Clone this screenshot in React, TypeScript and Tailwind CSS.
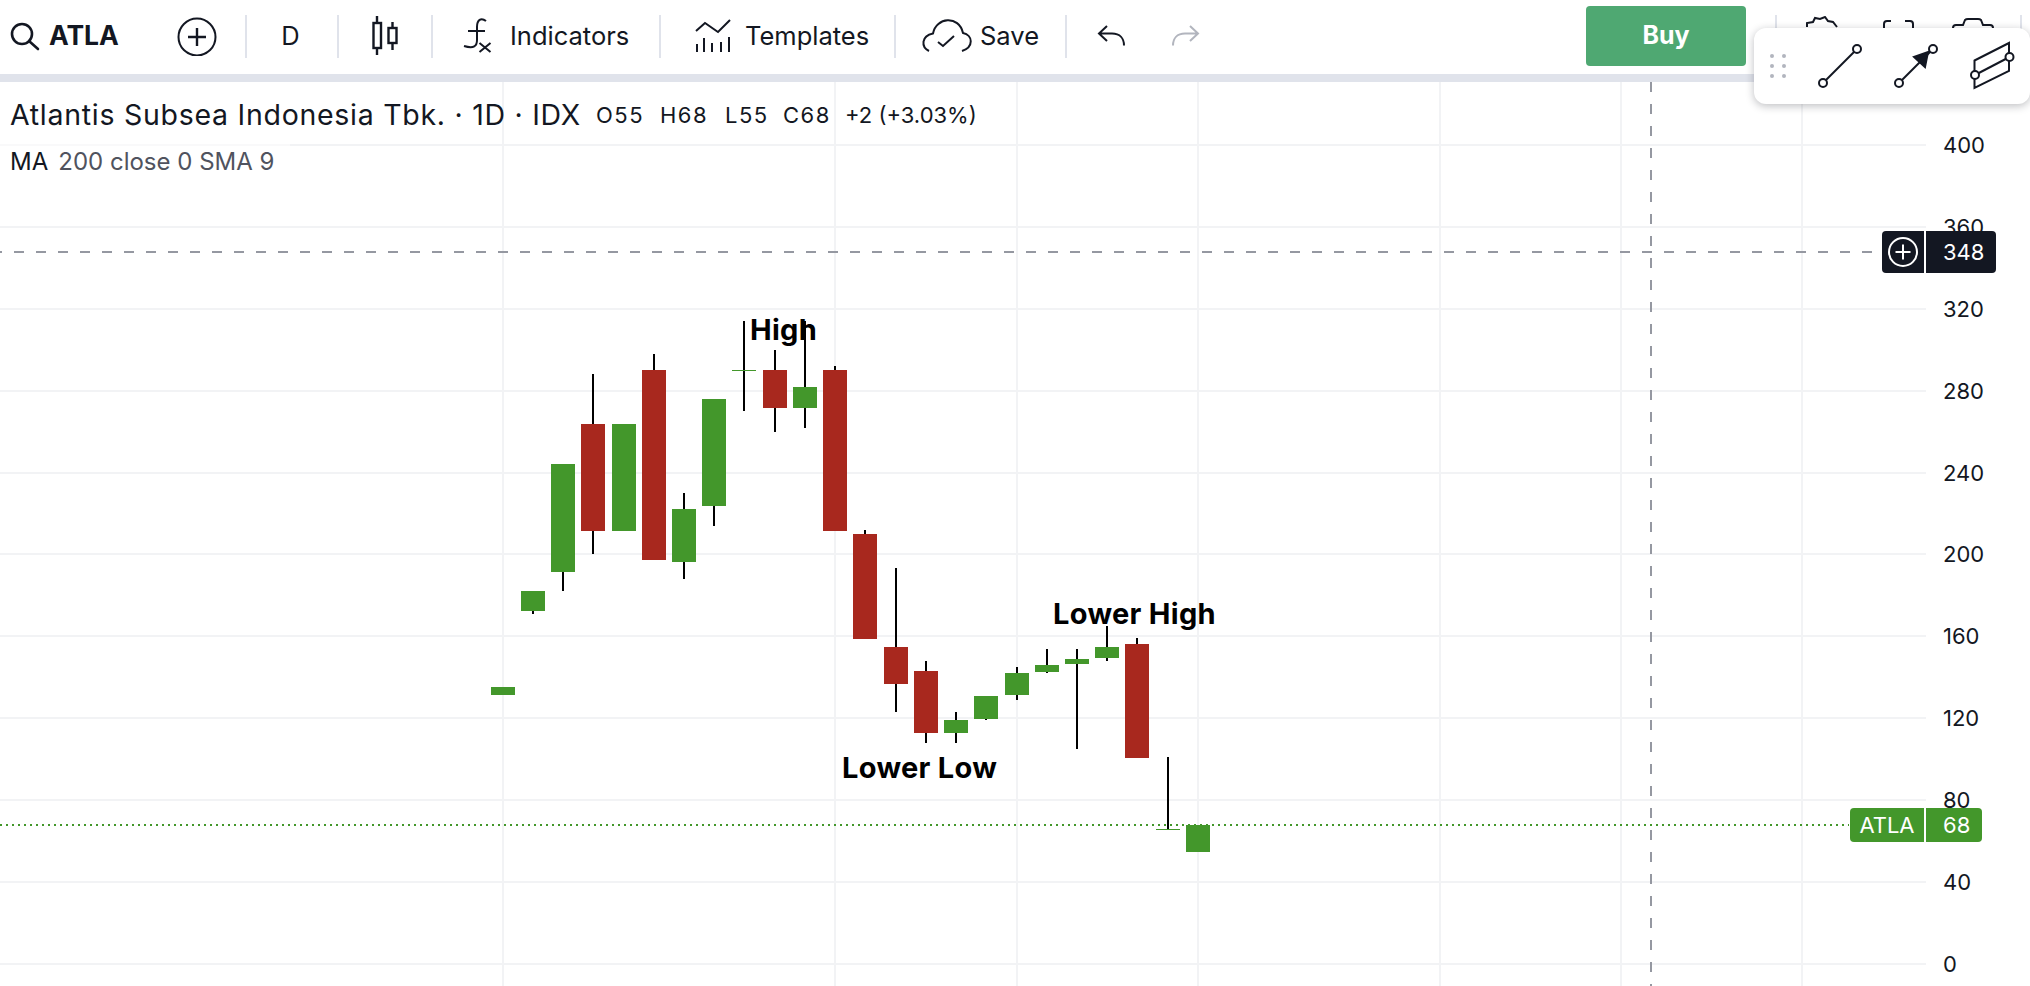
const FONT = "font-['Inter','Liberation_Sans',sans-serif]";

type Candle = { x: number; top: number; bottom: number; wickTop?: number; wickBottom?: number; up: boolean };

const candles: Candle[] = [
  { x: 503, top: 687, bottom: 695, up: true },
  { x: 533, top: 591, bottom: 611, wickBottom: 614, up: true },
  { x: 563, top: 464, bottom: 572, wickBottom: 591, up: true },
  { x: 593, top: 424, bottom: 531, wickTop: 374, wickBottom: 554, up: false },
  { x: 624, top: 424, bottom: 531, up: true },
  { x: 654, top: 370, bottom: 560, wickTop: 354, up: false },
  { x: 684, top: 509, bottom: 562, wickTop: 493, wickBottom: 579, up: true },
  { x: 714, top: 399, bottom: 506, wickBottom: 526, up: true },
  { x: 744, top: 370, bottom: 371, wickTop: 321, wickBottom: 411, up: true },
  { x: 775, top: 370, bottom: 408, wickTop: 350, wickBottom: 432, up: false },
  { x: 805, top: 387, bottom: 408, wickTop: 321, wickBottom: 428, up: true },
  { x: 835, top: 370, bottom: 531, wickTop: 366, up: false },
  { x: 865, top: 534, bottom: 639, wickTop: 530, up: false },
  { x: 896, top: 647, bottom: 684, wickTop: 568, wickBottom: 712, up: false },
  { x: 926, top: 671, bottom: 733, wickTop: 661, wickBottom: 743, up: false },
  { x: 956, top: 720, bottom: 733, wickTop: 712, wickBottom: 743, up: true },
  { x: 986, top: 696, bottom: 719, wickBottom: 720, up: true },
  { x: 1017, top: 673, bottom: 695, wickTop: 667, wickBottom: 700, up: true },
  { x: 1047, top: 665, bottom: 672, wickTop: 649, wickBottom: 673, up: true },
  { x: 1077, top: 659, bottom: 664, wickTop: 649, wickBottom: 749, up: true },
  { x: 1107, top: 647, bottom: 658, wickTop: 626, wickBottom: 661, up: true },
  { x: 1137, top: 644, bottom: 758, wickTop: 638, up: false },
  { x: 1168, top: 829, bottom: 830, wickTop: 757, up: true },
  { x: 1198, top: 825, bottom: 852, up: true },
];

const hGrid = [145, 227, 309, 391, 473, 554, 636, 718, 800, 882, 964];
const vGrid = [503, 835, 1017, 1198, 1440, 1621, 1802];
const ticks = ["400", "360", "320", "280", "240", "200", "160", "120", "80", "40", "0"];

function Divider() {
  return <div className="w-[2px] h-[43px] shrink-0 bg-[#e0e3eb]" />;
}

function Chart() {
  return (
    <svg className="block w-full h-full" viewBox="0 82 2030 904">
      {hGrid.map((y) => (
        <rect key={y} x={0} y={y - 1} width={1926} height={2} fill="#f2f3f5" />
      ))}
      {vGrid.map((x) => (
        <rect key={x} x={x - 1} y={82} width={2} height={904} fill="#f2f3f5" />
      ))}
      <line x1={-8} y1={252} x2={1872} y2={252} stroke="#9598a1" strokeWidth={2} strokeDasharray="10 12" />
      <line x1={1651} y1={82} x2={1651} y2={986} stroke="#9598a1" strokeWidth={2} strokeDasharray="10 12" />
      <line x1={0} y1={825} x2={1849} y2={825} stroke="#43972b" strokeWidth={2} strokeDasharray="2 4" />
      {candles.map((c) => (
        <g key={c.x}>
          {c.wickTop !== undefined && (
            <rect x={c.x - 1} y={c.wickTop} width={2} height={c.top - c.wickTop} fill="#000" />
          )}
          {c.wickBottom !== undefined && (
            <rect x={c.x - 1} y={c.bottom} width={2} height={c.wickBottom - c.bottom} fill="#000" />
          )}
          <rect
            x={c.x - 12}
            y={c.top}
            width={24}
            height={c.bottom - c.top}
            fill={c.up ? "#43972b" : "#a8281e"}
          />
        </g>
      ))}
      {ticks.map((t, i) => (
        <text key={t} x={1943} y={hGrid[i] + 8} fontSize={22} fill="#131722" fontFamily="Inter, sans-serif">
          {t}
        </text>
      ))}
      <g fontFamily="Inter, sans-serif" fontWeight={700} fontSize={29} fill="#000" letterSpacing="0.3">
        <text x={750} y={340}>High</text>
        <text x={1053} y={624}>Lower High</text>
        <text x={842} y={778}>Lower Low</text>
      </g>
    </svg>
  );
}

function Toolbar() {
  return (
    <div className="h-[74px] shrink-0 flex items-center pb-[2px] bg-white text-[#131722] text-[25.5px]">
      <div className="w-[245px] shrink-0 flex items-center">
        <svg className="ml-[10px] shrink-0" width={32} height={40} viewBox="10 16 32 40" fill="none" stroke="#131722" strokeWidth={2.6}>
          <circle cx={22} cy={34} r={10} />
          <path d="M29 41l9 8" strokeLinecap="round" />
        </svg>
        <span className="ml-[7px] font-bold text-[26.5px]">ATLA</span>
        <svg className="ml-auto mr-[27px] shrink-0" width={42} height={40} viewBox="176 16 42 40" fill="none" stroke="#131722">
          <circle cx={197} cy={37} r={18.5} strokeWidth={2} />
          <path d="M188 37h18M197 28v18" strokeWidth={2.4} />
        </svg>
      </div>
      <Divider />
      <div className="w-[90px] shrink-0 flex justify-center pr-[3px]">D</div>
      <Divider />
      <div className="w-[92px] shrink-0 flex justify-center">
        <svg width={27} height={40} viewBox="372 16 27 40" fill="none" stroke="#131722" strokeWidth={2.4}>
          <rect x={373.5} y={23} width={7.5} height={25} />
          <path d="M377 16v7M377 48v7" />
          <rect x={388.5} y={28} width={8} height={15} />
          <path d="M392.5 22v6M392.5 43v7" />
        </svg>
      </div>
      <Divider />
      <div className="w-[226px] shrink-0 flex items-center pl-[29px]">
        <svg className="shrink-0" width={32} height={40} viewBox="462 16 32 40" fill="none" stroke="#131722" strokeWidth={2}>
          <path d="M486 21c-5-4-9-1-9 6v13c0 6-3 9-13 6" />
          <path d="M468 31h17" />
          <path d="M479.5 43l11 9M490.5 43l-11 9" />
        </svg>
        <span className="ml-[16px]">Indicators</span>
      </div>
      <Divider />
      <div className="w-[233px] shrink-0 flex items-center pl-[33px]">
        <svg className="shrink-0" width={38} height={40} viewBox="694 16 38 40" fill="none" stroke="#131722" strokeWidth={2}>
          <path d="M696 31l9-8 13 9 12-12" />
          <path d="M697 44v8M704 38v14M712 43v9M721 42v10M729 37v15" />
        </svg>
        <span className="ml-[13px]">Templates</span>
      </div>
      <Divider />
      <div className="w-[169px] shrink-0 flex items-center pl-[25px]">
        <svg className="shrink-0" width={51} height={40} viewBox="921 16 51 40" fill="none" stroke="#131722" strokeWidth={2}>
          <path d="M929 51C921 47 921 36 933 33.500C936 17 959 15 963 33C973 35 974 47 962 51" />
          <path d="M938 42l5 4 11-10" />
        </svg>
        <span className="ml-[8px]">Save</span>
      </div>
      <Divider />
      <div className="flex items-center pl-[29px] shrink-0">
        <svg width={31} height={40} viewBox="1096 16 31 40" fill="none" stroke="#131722" strokeWidth={2}>
          <path d="M1107 26l-8 7.500 8 7.500M1099 33.500h13c8 0 12 5 12 12" />
        </svg>
        <svg className="ml-[44px]" width={31} height={40} viewBox="1171 16 31 40" fill="none" stroke="#b2b5be" strokeWidth={2}>
          <path d="M1190 26l8 7.500-8 7.500M1198 33.500h-13c-8 0-12 5-12 12" />
        </svg>
      </div>
      <div className="flex-1" />
      <div className="w-[160px] h-[60px] shrink-0 flex items-center justify-center rounded-[4px] bg-[#4fa872] text-white font-bold text-[25px]">
        Buy
      </div>
      <div className="ml-[29px]">
        <Divider />
      </div>
      <svg className="ml-[28px] shrink-0" width={34} height={40} viewBox="1805 16 34 40" fill="none" stroke="#131722" strokeWidth={2}>
        <path d="M1807 27v-4l6-1 2-4 5 1 5-2 3 4 5 1 4 5" />
      </svg>
      <svg className="ml-[42px] shrink-0" width={34} height={40} viewBox="1881 16 34 40" fill="none" stroke="#131722" strokeWidth={2}>
        <path d="M1884 30v-6q0-3 3-3h4M1905 21h5q3 0 3 3v6" />
      </svg>
      <svg className="ml-[36px] shrink-0" width={45} height={40} viewBox="1951 16 45 40" fill="none" stroke="#131722" strokeWidth={2}>
        <path d="M1953 30v-2q0-3 3-3h7l2-5q1-1 3-1h10q2 0 3 1l2 5h7q3 0 3 3v2" />
      </svg>
      <div className="ml-[24px] mr-[8px]">
        <Divider />
      </div>
    </div>
  );
}

function DrawingTools() {
  return (
    <div className="absolute left-[1754px] top-[28px] w-[276px] h-[76px] rounded-[12px] bg-white shadow-[0_2px_8px_rgba(19,23,34,0.28)] flex items-center">
      <svg width={276} height={76} viewBox="1754 28 276 76" fill="none">
        <g fill="#b2b5be">
          {[1772, 1784].map((x) =>
            [56, 66, 76].map((y) => <circle key={`${x}-${y}`} cx={x} cy={y} r={2} />)
          )}
        </g>
        <g stroke="#131722" strokeWidth={2}>
          <path d="M1823 83L1857 49" />
          <circle cx={1823} cy={83} r={4} fill="#fff" />
          <circle cx={1857} cy={49} r={4} fill="#fff" />
          <path d="M1899 83L1933 49" />
          <path d="M1914 57l14-5-3 15z" fill="#131722" />
          <circle cx={1899} cy={83} r={4} fill="#fff" />
          <circle cx={1933} cy={49} r={4} fill="#fff" />
          <path d="M1974.500 60.500L2009 43v28l-34.500 17z" />
          <path d="M1975 75l34.500-18" />
          <circle cx={1975} cy={75} r={4} fill="#fff" />
          <circle cx={2009.5} cy={57} r={4} fill="#fff" />
        </g>
      </svg>
    </div>
  );
}

export default function App() {
  return (
    <div className={`relative w-[2030px] h-[986px] overflow-hidden flex flex-col bg-white text-[#131722] ${FONT}`}>
      <Toolbar />
      <div className="h-[8px] shrink-0 bg-[#e0e3eb]" />
      <div className="relative flex-1 min-h-0">
        <Chart />
        <div className="absolute left-0 top-[14px] flex flex-col">
          <div className="h-[38px] pl-[10px] flex items-center whitespace-nowrap">
            <span className="w-[586px] text-[28.5px] tracking-[0.72px]">Atlantis Subsea Indonesia Tbk. · 1D · IDX</span>
            <span className="text-[22px] flex">
              <span className="w-[64px] tracking-[1.5px]">O55</span>
              <span className="w-[65px] tracking-[1.5px]">H68</span>
              <span className="w-[58px] tracking-[1.5px]">L55</span>
              <span className="w-[62px] tracking-[1.5px]">C68</span>
              <span>+2 (+3.03%)</span>
            </span>
          </div>
          <div className="mt-[9px] w-[290px] h-[38px] pl-[10px] flex items-center gap-[10px] bg-white/50 text-[24px] whitespace-nowrap">
            <span>MA</span>
            <span className="text-[#50535e]">200 close 0 SMA 9</span>
          </div>
        </div>
        <div className="absolute left-[1882px] top-[149px] h-[42px] flex gap-[2px] text-white text-[22px]">
          <div className="w-[42px] rounded-l-[4px] bg-[#131722] flex items-center justify-center">
            <svg width={30} height={30} viewBox="0 0 30 30" fill="none" stroke="#fff">
              <circle cx={15} cy={15} r={14} strokeWidth={2} />
              <path d="M7.500 15h15M15 7.500v15" strokeWidth={2} />
            </svg>
          </div>
          <div className="w-[70px] rounded-r-[4px] bg-[#131722] flex items-center pl-[17px]">348</div>
        </div>
        <div className="absolute left-[1850px] top-[726px] h-[34px] flex gap-[2px] text-white text-[22px]">
          <div className="w-[74px] rounded-l-[4px] bg-[#43972b] flex items-center justify-center">ATLA</div>
          <div className="w-[56px] rounded-r-[4px] bg-[#43972b] flex items-center pl-[17px]">68</div>
        </div>
      </div>
      <DrawingTools />
    </div>
  );
}
